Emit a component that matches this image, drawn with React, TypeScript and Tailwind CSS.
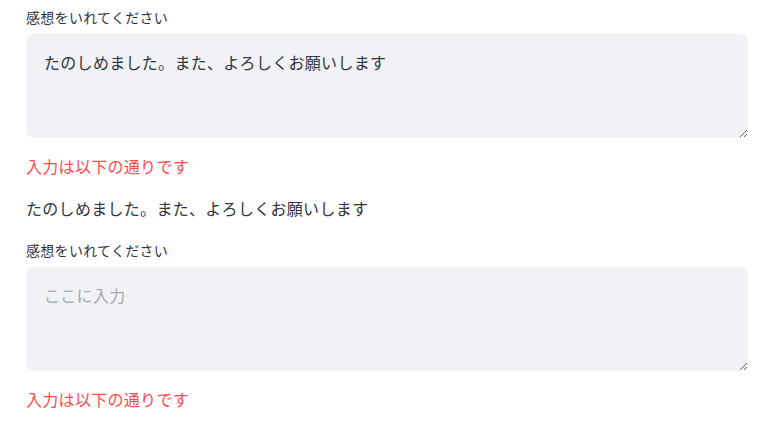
import { useState } from 'react'

const font = { fontFamily: '"Noto Sans CJK JP", "Noto Sans", sans-serif' }

function FeedbackBlock({ initial }: { initial: string }) {
  const [text, setText] = useState(initial)

  return (
    <div>
      <label className="mb-[7px] block text-sm leading-5 tracking-[0.3px] text-[#31333f]">感想をいれてください</label>
      <textarea
        value={text}
        onChange={(e) => setText(e.target.value)}
        placeholder="ここに入力"
        className="block h-[104px] w-full rounded-lg bg-[#f0f2f6] px-[18px] pt-4 text-base leading-6 tracking-[0.3px] text-[#31333f] placeholder:text-[#a3a8b4] focus:outline-none"
        style={font}
      />
      <p className="mt-4 text-base leading-6 tracking-[0.3px] text-[#ff4b4b]">入力は以下の通りです</p>
      {text && <p className="mt-[18px] text-base leading-6 tracking-[0.3px] text-[#31333f]">{text}</p>}
    </div>
  )
}

export default function App() {
  return (
    <div className="bg-white pl-[26px] pr-5 pt-[7px]" style={font}>
      <FeedbackBlock initial="たのしめました。また、よろしくお願いします" />
      <div className="mt-5">
        <FeedbackBlock initial="" />
      </div>
    </div>
  )
}
